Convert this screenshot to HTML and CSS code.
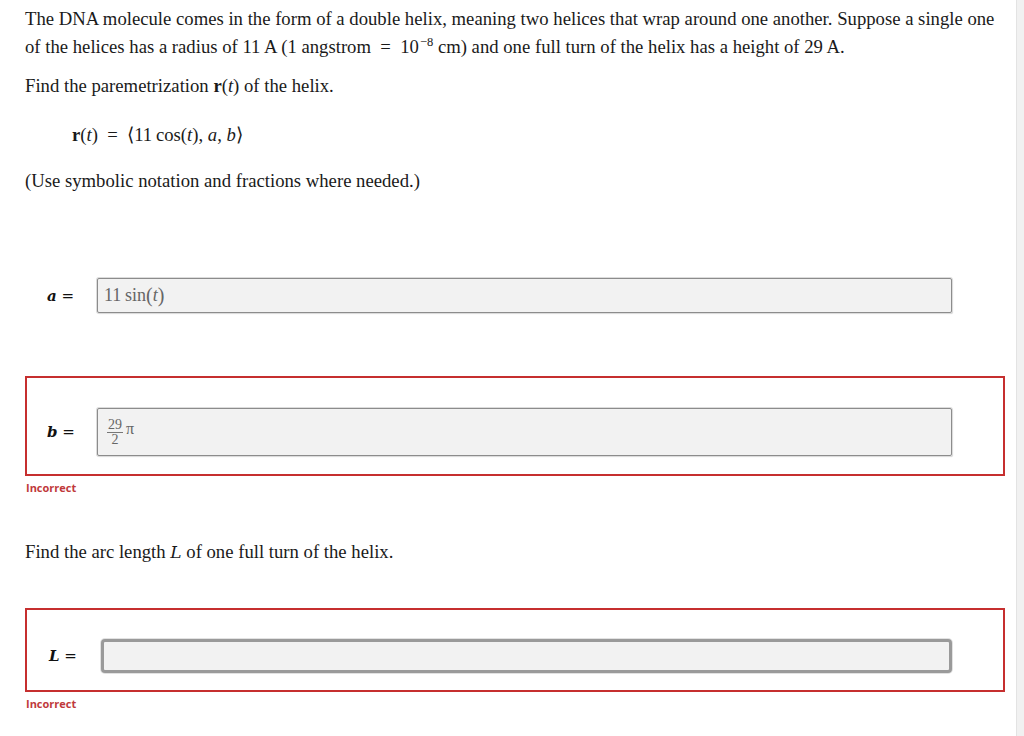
FILE: index.html
```html
<!DOCTYPE html>
<html>
<head>
<meta charset="utf-8">
<link rel="stylesheet" href="styles.css">
</head>
<body>
<div class="page">
  <main class="content">
    <p class="intro">The DNA molecule comes in the form of a double helix, meaning two helices that wrap around one another. Suppose a single one of the helices has a radius of 11 A (1 angstrom &nbsp;=&nbsp; 10<sup>&minus;8</sup> cm) and one full turn of the helix has a height of 29 A.</p>
    <p class="find">Find the paremetrization <b>r</b>(<i>t</i>) of the helix.</p>
    <p class="formula"><b>r</b>(<i>t</i>) &nbsp;=&nbsp; &#x27E8;11&#x2009;cos(<i>t</i>), <i>a</i>, <i>b</i>&#x27E9;</p>
    <p class="note">(Use symbolic notation and fractions where needed.)</p>

    <div class="answer plain">
      <div class="row row-a">
        <span class="label"><i>a</i> =</span>
        <div class="field">11&#x2009;sin<span class="paren">(</span><i>t</i><span class="paren">)</span></div>
      </div>
    </div>

    <div class="answer wrong box-b">
      <div class="row">
        <span class="label"><i>b</i> =</span>
        <div class="field field-b"><span class="frac"><span class="num">29</span><span class="den">2</span></span><span class="pi">&pi;</span></div>
      </div>
    </div>
    <div class="status">Incorrect</div>

    <p class="find arc">Find the arc length <i class="L">L</i> of one full turn of the helix.</p>

    <div class="answer wrong box-l">
      <div class="row">
        <span class="label label-l"><i>L</i> =</span>
        <div class="field field-l"></div>
      </div>
    </div>
    <div class="status">Incorrect</div>
  </main>
  <div class="scrollbar"></div>
</div>
</body>
</html>
```

FILE: styles.css
```css
html, body {
  margin: 0;
  padding: 0;
  background: #ffffff;
}

.page {
  display: flex;
  width: 1024px;
  height: 736px;
  overflow: hidden;
}

.content {
  width: 1016px;
  box-sizing: border-box;
  padding-left: 25px;
  font-family: "Liberation Serif", "Times New Roman", serif;
  font-size: 18.7px;
  color: #1a1a1a;
}

.scrollbar {
  width: 7px;
  flex: none;
  background: #f1f1f1;
  border-left: 1px solid #e3e3e3;
}

p {
  margin: 0;
}

.intro {
  margin-top: 5px;
  line-height: 28px;
  width: 978px;
}

.intro sup {
  font-size: 12.5px;
  line-height: 1;
  vertical-align: 7px;
  padding-left: 1px;
}

.find {
  margin-top: 11px;
  line-height: 28px;
}

.formula {
  margin-top: 21px;
  padding-left: 47px;
  line-height: 28px;
}

.note {
  margin-top: 18px;
  line-height: 28px;
}

.answer {
  width: 980px;
  box-sizing: border-box;
}

.plain {
  margin-top: 83px;
}

.row {
  display: flex;
  align-items: center;
}

.label {
  width: 72px;
  box-sizing: border-box;
  padding-left: 22px;
  font-family: "DejaVu Serif", serif;
  font-size: 15px;
  color: #111;
}

.label i {
  font-weight: bold;
}

.field {
  width: 855px;
  height: 35px;
  box-sizing: border-box;
  background: #f2f2f2;
  border: 1px solid #8c8c8c;
  border-radius: 2px;
  box-shadow: 0 0 0 1px #dcdcdc, 1px 1px 1px #cfcfcf;
  padding-left: 6px;
  display: flex;
  align-items: center;
  font-family: "Liberation Serif", serif;
  font-size: 18px;
  color: #666;
}

.paren {
  font-size: 20px;
}

.wrong {
  border: 2px solid #c62f2f;
}

.box-b {
  margin-top: 63px;
  height: 100px;
  padding-top: 30px;
}

.box-b .label {
  width: 70px;
  padding-left: 20px;
}

.field-b {
  height: 48px;
  width: 855px;
  padding-left: 9px;
}

.frac {
  display: inline-flex;
  flex-direction: column;
  align-items: center;
  font-size: 14px;
  line-height: 14px;
  margin-right: 3px;
}

.frac .num {
  border-bottom: 1px solid #777;
  padding: 0 1px;
}

.pi {
  font-size: 16px;
  margin-top: -6px;
}

.status {
  margin-top: 5px;
  padding-left: 1px;
  font-family: "Open Sans", "Noto Sans", sans-serif;
  font-weight: 700;
  font-size: 11px;
  line-height: 14px;
  color: #c0393b;
}

.arc {
  margin-top: 43px;
}

.L {
  font-family: "DejaVu Serif", serif;
  font-size: 17px;
}

.box-l {
  margin-top: 42px;
  height: 84px;
  padding-top: 29px;
}

.label-l {
  width: 74px;
}

.field-l {
  width: 851px;
  height: 34px;
  border: 3px solid #9a9a9a;
  border-radius: 4px;
  box-shadow: 0 0 0 1px #e2e2e2;
}
```
